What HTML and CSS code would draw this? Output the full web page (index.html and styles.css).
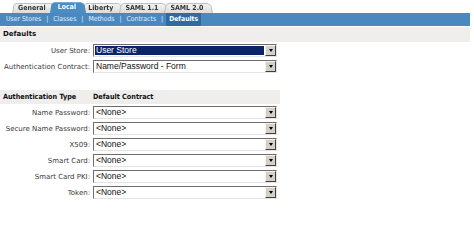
FILE: index.html
```html
<!DOCTYPE html>
<html>
<head>
<meta charset="utf-8">
<link rel="stylesheet" href="styles.css">
</head>
<body>
<div class="page">
  <div class="tabs">
    <div class="tab">General</div>
    <div class="tab active">Local</div>
    <div class="tab">Liberty</div>
    <div class="tab">SAML 1.1</div>
    <div class="tab">SAML 2.0</div>
  </div>
  <div class="subnav">
    <span class="sub">User Stores</span><span class="sep">|</span>
    <span class="sub">Classes</span><span class="sep">|</span>
    <span class="sub">Methods</span><span class="sep">|</span>
    <span class="sub">Contracts</span><span class="sep">|</span>
    <span class="sub current">Defaults</span>
  </div>
  <div class="section-head">Defaults</div>
  <div class="form">
    <div class="row">
      <label class="lbl">User Store:</label>
      <div class="select"><span class="val selected">User Store</span><span class="arrow"><i></i></span></div>
    </div>
    <div class="row">
      <label class="lbl">Authentication Contract:</label>
      <div class="select"><span class="val">Name/Password - Form</span><span class="arrow"><i></i></span></div>
    </div>
  </div>
  <div class="table-head">
    <span class="th1">Authentication Type</span>
    <span class="th2">Default Contract</span>
  </div>
  <div class="form list">
    <div class="row"><label class="lbl">Name Password:</label><div class="select"><span class="val">&lt;None&gt;</span><span class="arrow"><i></i></span></div></div>
    <div class="row"><label class="lbl">Secure Name Password:</label><div class="select"><span class="val">&lt;None&gt;</span><span class="arrow"><i></i></span></div></div>
    <div class="row"><label class="lbl">X509:</label><div class="select"><span class="val">&lt;None&gt;</span><span class="arrow"><i></i></span></div></div>
    <div class="row"><label class="lbl">Smart Card:</label><div class="select"><span class="val">&lt;None&gt;</span><span class="arrow"><i></i></span></div></div>
    <div class="row"><label class="lbl">Smart Card PKI:</label><div class="select"><span class="val">&lt;None&gt;</span><span class="arrow"><i></i></span></div></div>
    <div class="row"><label class="lbl">Token:</label><div class="select"><span class="val">&lt;None&gt;</span><span class="arrow"><i></i></span></div></div>
  </div>
</div>
</body>
</html>
```

FILE: styles.css
```css
html, body {
  margin: 0;
  padding: 0;
  background: #ffffff;
}
.page {
  font-family: "DejaVu Sans", Verdana, sans-serif;
  font-size: 7px;
  color: #222;
  width: 474px;
}
.tabs {
  display: flex;
  height: 13px;
  padding-left: 12px;
  align-items: flex-end;
}
.tab {
  position: relative;
  height: 11px;
  line-height: 12px;
  padding: 0 7px 0 6px;
  margin-right: -1px;
  font-family: "DejaVu Sans Condensed", "DejaVu Sans", sans-serif;
  font-weight: bold;
  font-size: 7px;
  color: #333;
  z-index: 1;
}
.tab::before {
  content: "";
  position: absolute;
  left: 0;
  right: -3px;
  top: 0;
  bottom: 0;
  background: linear-gradient(#f4f4f4, #dcdcdc);
  border: 1px solid #bdbdbd;
  border-bottom: none;
  border-radius: 4px 5px 0 0;
  transform: perspective(12px) rotateX(6deg);
  transform-origin: bottom;
  z-index: -1;
}
.tab.active {
  color: #fff;
  height: 12px;
  line-height: 13px;
  z-index: 2;
}
.tab.active::before {
  background: #4b8cc2;
  border-color: #4b8cc2;
  left: -2px;
  right: -3px;
}
.subnav {
  width: 470px;
  height: 13px;
  background: #4a89bf;
  display: flex;
  align-items: stretch;
  padding-left: 6px;
  box-sizing: border-box;
  color: #e4eef8;
  font-family: "DejaVu Sans Condensed", "DejaVu Sans", sans-serif;
  font-size: 6.8px;
  line-height: 13px;
}
.sep {
  margin: 0 5px;
}
.sub.current {
  background: #2f6aa0;
  color: #fff;
  font-weight: bold;
  padding: 0 3px 0 3px;
  margin-left: -2px;
}
.section-head {
  width: 470px;
  height: 15px;
  line-height: 15px;
  background: #efeeed;
  font-weight: bold;
  padding-left: 3px;
  box-sizing: border-box;
  margin-top: 1px;
  color: #111;
}
.form {
  display: flex;
  flex-direction: column;
  gap: 3px;
  padding-top: 2px;
}
.list {
  padding-top: 2px;
}
.row {
  display: flex;
  align-items: center;
  height: 13px;
}
.lbl {
  width: 93px;
  text-align: right;
  padding-right: 3px;
  box-sizing: border-box;
  flex: none;
  color: #3a3a3a;
  white-space: nowrap;
}
.select {
  width: 184px;
  height: 13px;
  display: flex;
  box-sizing: border-box;
  border-top: 1px solid #6e6e6e;
  border-left: 1px solid #6e6e6e;
  border-right: 1px solid #e4e4e4;
  border-bottom: 1px solid #e4e4e4;
  background: #fff;
  font-family: "Liberation Sans", Arial, sans-serif;
  font-size: 8.5px;
}
.val {
  flex: 1;
  line-height: 11px;
  padding-left: 2px;
  color: #111;
  white-space: nowrap;
}
.val.selected {
  background: #0a246a;
  color: #fff;
  margin: 1px;
  padding-left: 1px;
  line-height: 9px;
}
.arrow {
  width: 11px;
  flex: none;
  background: #d4d0c8;
  border: 1px solid;
  border-color: #f4f4f4 #404040 #404040 #f4f4f4;
  box-sizing: border-box;
  display: flex;
  align-items: center;
  justify-content: center;
}
.arrow i {
  width: 0;
  height: 0;
  border-left: 2.5px solid transparent;
  border-right: 2.5px solid transparent;
  border-top: 3px solid #000;
}
.table-head {
  width: 280px;
  height: 14px;
  line-height: 14px;
  background: #efeeed;
  margin-top: 17px;
  display: flex;
  font-family: "DejaVu Sans Condensed", "DejaVu Sans", sans-serif;
  font-weight: bold;
  font-size: 7.2px;
  color: #111;
}
.th1 {
  width: 93px;
  padding-left: 3px;
  box-sizing: border-box;
}
```
